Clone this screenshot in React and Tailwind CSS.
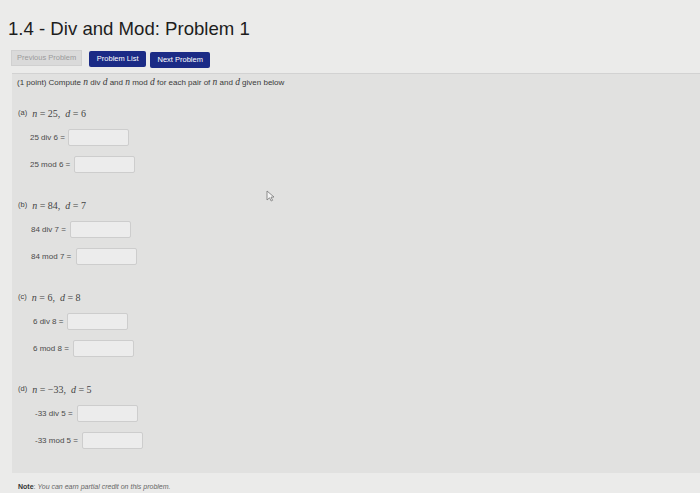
import React from "react";

const parts = [
  { label: "(a)", n: "25", d: "6", pad: "pl-[18px]", w1: "ml-[3px]", w2: "ml-[4px]" },
  { label: "(b)", n: "84", d: "7", pad: "pl-[19px]", w1: "ml-[4px]", w2: "ml-[5px]" },
  { label: "(c)", n: "6", d: "8", pad: "pl-[21px]", w1: "ml-[4px]", w2: "ml-[4px]" },
  { label: "(d)", n: "−33", d: "5", pad: "pl-[23px]", w1: "ml-[4px]", w2: "ml-[4px]" },
];

function Campo({ texto, extra }) {
  return (
    <div className="flex items-center h-[17px]">
      <span className="text-[8px] text-[#4a4a4a]">{texto}</span>
      <div className={"w-[61px] h-[17px] bg-[#ececec] border border-[#cdcdcd] rounded-[2px] " + extra} />
    </div>
  );
}

function Parte({ p, first }) {
  const nTxt = p.n.replace("−", "-");
  return (
    <div className={first ? "mt-[1px]" : "mt-[26px]"}>
      <div className="flex items-center h-[12px] pl-[6px] text-[#444]">
        <span className="text-[7.5px] mr-[5px]">{p.label}</span>
        <span className="font-['Liberation_Serif',serif] text-[10px] whitespace-pre">
          <i>n</i> = {p.n},  <i>d</i> = {p.d}
        </span>
      </div>
      <div className={"mt-[10px] " + p.pad}>
        <Campo texto={nTxt + " div " + p.d + " ="} extra={p.w1} />
        <div className="mt-[10px]">
          <Campo texto={nTxt + " mod " + p.d + " ="} extra={p.w2} />
        </div>
      </div>
    </div>
  );
}

const M = ({ c }) => <i className="font-['Liberation_Serif',serif] text-[9.5px]">{c}</i>;

export default function App() {
  return (
    <div className="w-[700px] h-[493px] overflow-hidden bg-[#ebebea] font-['Liberation_Sans',Arial,sans-serif] relative">
      <h1 className="pl-[8px] pt-[16px] text-[18.6px] leading-[26px] text-[#1d1d1d]">
        1.4 - Div and Mod: Problem 1
      </h1>

      <div className="flex items-start gap-[7px] pl-[11px] mt-[8px]">
        <div className="h-[16px] px-[5px] flex items-center bg-[#dadada] text-[#9b9b9b] text-[7.5px] border border-[#d0d0d0]">
          Previous Problem
        </div>
        <div className="h-[16px] w-[57px] mt-[1px] flex items-center justify-center bg-[#1b2b86] text-white text-[7.5px] rounded-[2px]">
          Problem List
        </div>
        <div className="h-[16px] w-[60px] mt-[2px] -ml-[3px] flex items-center justify-center bg-[#1b2b86] text-white text-[7.5px] rounded-[2px]">
          Next Problem
        </div>
      </div>

      <div className="ml-[12px] mt-[5px] h-[400px] bg-[#e1e1e0] border-t border-[#d2d2d2]">
        <div className="pl-[5px] pt-[5px] text-[8px] text-[#3a3a3a] h-[12px] flex items-center">
          <span>
            (1 point) Compute <M c="n" /> div <M c="d" /> and <M c="n" /> mod <M c="d" /> for each pair of{" "}
            <M c="n" /> and <M c="d" /> given below
          </span>
        </div>
        <div className="mt-[21px]">
          {parts.map((p, i) => (
            <Parte key={p.label} p={p} first={i === 0} />
          ))}
        </div>
      </div>

      <div className="pl-[18px] mt-[9px] text-[7px] text-[#666]">
        <b className="text-[#333]">Note</b>: <i>You can earn partial credit on this problem.</i>
      </div>

      <svg className="absolute left-[266px] top-[190px]" width="9" height="12" viewBox="0 0 9 12">
        <path d="M1 1 L1 10 L3.5 7.8 L5.2 11 L6.6 10.3 L5 7.2 L8 7 Z" fill="#f4f4f4" stroke="#777" strokeWidth="0.8" />
      </svg>
    </div>
  );
}
